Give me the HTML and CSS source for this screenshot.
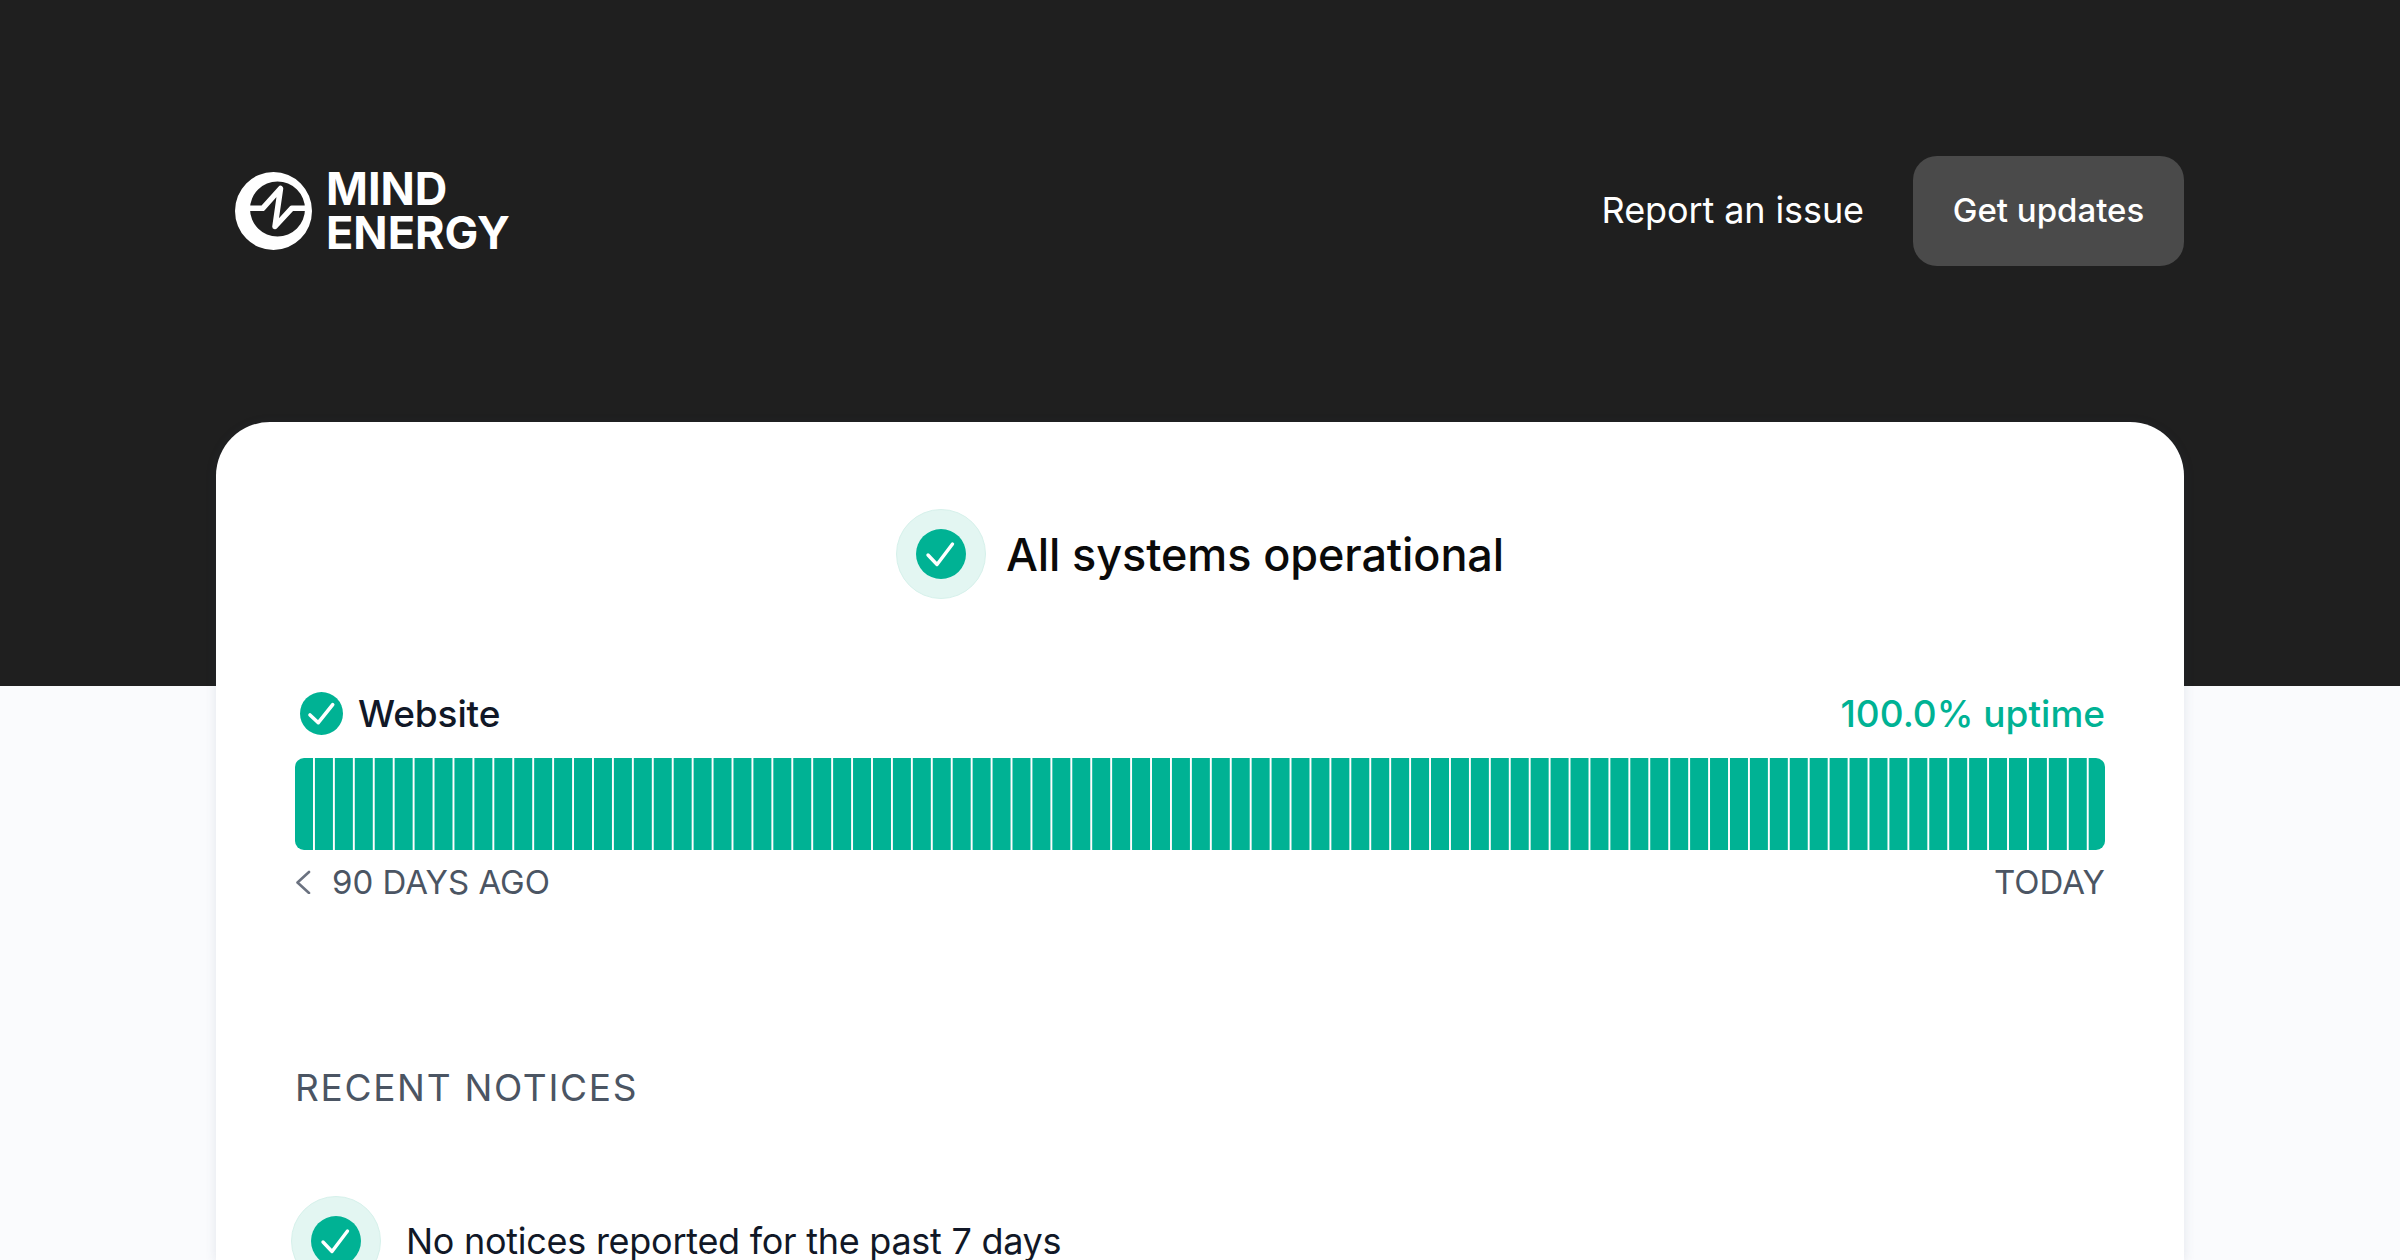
FILE: index.html
```html
<!DOCTYPE html>
<html lang="en">
<head>
<meta charset="utf-8">
<title>Mind Energy Status</title>
<link rel="stylesheet" href="styles.css">
</head>
<body>
<div class="page">
  <header class="topbar">
    <div class="logo">
      <svg class="logo-mark" viewBox="0 0 77 78" aria-hidden="true">
        <path fill="#fff" fill-rule="evenodd" d="M38.5 0a38.5 39 0 1 1 0 78a38.5 39 0 1 1 0-78ZM42.5 9.5a27.5 27.5 0 1 0 0 55a27.5 27.5 0 1 0 0-55Z"/>
        <path fill="none" stroke="#fff" stroke-width="5.5" stroke-linecap="round" stroke-linejoin="round" d="M15 36.3H27.7L45.5 16.5L40 54.5L56.7 36.3H70"/>
      </svg>
      <div class="logo-text">MIND<br>ENERGY</div>
    </div>
    <nav class="nav">
      <a class="nav-link">Report an issue</a>
      <a class="nav-button">Get updates</a>
    </nav>
  </header>
  <main class="card">
    <div class="status">
      <span class="halo"><svg class="check-dot" viewBox="0 0 50 50" aria-hidden="true"><circle cx="25" cy="25" r="25" fill="#00b294"/><path d="M12 26L21 35.5L36.5 15" fill="none" stroke="#fff" stroke-width="3.4" stroke-linecap="round" stroke-linejoin="round"/></svg></span>
      <h1 class="status-title">All systems operational</h1>
    </div>
    <section class="monitor">
      <div class="monitor-head">
        <div class="monitor-name">
          <svg class="check-small" viewBox="0 0 43 43" aria-hidden="true"><circle cx="21.5" cy="21.5" r="21.5" fill="#00b294"/><path d="M10 23L18.3 30.7L32.7 12.7" fill="none" stroke="#fff" stroke-width="3.6" stroke-linecap="round" stroke-linejoin="round"/></svg>
          <span>Website</span>
        </div>
        <div class="uptime">100.0% uptime</div>
      </div>
      <svg class="bars" viewBox="0 0 1810 92" aria-hidden="true">
        <rect x="0"/><rect x="19.93"/><rect x="39.86"/><rect x="59.79"/><rect x="79.72"/><rect x="99.65"/><rect x="119.58"/><rect x="139.51"/><rect x="159.44"/><rect x="179.37"/>
        <rect x="199.3"/><rect x="219.23"/><rect x="239.16"/><rect x="259.09"/><rect x="279.02"/><rect x="298.95"/><rect x="318.88"/><rect x="338.81"/><rect x="358.74"/><rect x="378.67"/>
        <rect x="398.6"/><rect x="418.53"/><rect x="438.46"/><rect x="458.39"/><rect x="478.32"/><rect x="498.25"/><rect x="518.18"/><rect x="538.11"/><rect x="558.04"/><rect x="577.97"/>
        <rect x="597.9"/><rect x="617.83"/><rect x="637.76"/><rect x="657.69"/><rect x="677.62"/><rect x="697.55"/><rect x="717.48"/><rect x="737.41"/><rect x="757.34"/><rect x="777.27"/>
        <rect x="797.2"/><rect x="817.13"/><rect x="837.06"/><rect x="856.99"/><rect x="876.92"/><rect x="896.85"/><rect x="916.78"/><rect x="936.71"/><rect x="956.64"/><rect x="976.57"/>
        <rect x="996.5"/><rect x="1016.43"/><rect x="1036.36"/><rect x="1056.29"/><rect x="1076.22"/><rect x="1096.15"/><rect x="1116.08"/><rect x="1136.01"/><rect x="1155.94"/><rect x="1175.87"/>
        <rect x="1195.8"/><rect x="1215.73"/><rect x="1235.66"/><rect x="1255.59"/><rect x="1275.52"/><rect x="1295.45"/><rect x="1315.38"/><rect x="1335.31"/><rect x="1355.24"/><rect x="1375.17"/>
        <rect x="1395.1"/><rect x="1415.03"/><rect x="1434.96"/><rect x="1454.89"/><rect x="1474.82"/><rect x="1494.75"/><rect x="1514.68"/><rect x="1534.61"/><rect x="1554.54"/><rect x="1574.47"/>
        <rect x="1594.4"/><rect x="1614.33"/><rect x="1634.26"/><rect x="1654.19"/><rect x="1674.12"/><rect x="1694.05"/><rect x="1713.98"/><rect x="1733.91"/><rect x="1753.84"/><rect x="1773.77"/>
        <rect x="1793.7" class="bar-last"/>
      </svg>
      <div class="range">
        <div class="range-start">
          <svg class="chevron" viewBox="0 0 16 24" aria-hidden="true"><path d="M14 2L2.5 12.5L14 23" fill="none" stroke="#6b7280" stroke-width="2.6" stroke-linecap="round" stroke-linejoin="round"/></svg>
          <span>90 DAYS AGO</span>
        </div>
        <span>TODAY</span>
      </div>
    </section>
    <section class="notices">
      <h2 class="notices-title">RECENT NOTICES</h2>
      <div class="notice">
        <span class="halo"><svg class="check-dot" viewBox="0 0 50 50" aria-hidden="true"><circle cx="25" cy="25" r="25" fill="#00b294"/><path d="M12 26L21 35.5L36.5 15" fill="none" stroke="#fff" stroke-width="3.4" stroke-linecap="round" stroke-linejoin="round"/></svg></span>
        <span class="notice-text">No notices reported for the past 7 days</span>
      </div>
    </section>
  </main>
</div>
</body>
</html>
```
FILE: styles.css
```css
* { box-sizing: border-box; }
html, body { margin: 0; }
body {
  height: 1260px;
  overflow: hidden;
  font-family: Inter, "Liberation Sans", sans-serif;
  background: linear-gradient(#1f1f1f 0 686px, #fafbfd 686px);
}
.page { width: 1968px; height: 1260px; margin: 0 auto; }
.topbar {
  height: 422px;
  display: flex;
  align-items: center;
  justify-content: space-between;
  padding: 0 0 0 19px;
}
.logo { display: flex; align-items: center; gap: 14px; color: #fff; }
.logo-mark { width: 77px; height: 78px; display: block; }
.logo-text { font-size: 45px; font-weight: 700; line-height: 44px; }
.nav { display: flex; align-items: center; gap: 49px; }
.nav-link { font-size: 36px; color: #fff; padding-bottom: 2px; letter-spacing: -0.1px; }
.nav-button {
  width: 271px;
  height: 110px;
  display: flex;
  align-items: center;
  justify-content: center;
  padding-bottom: 2px;
  border-radius: 24px;
  background: #4a4a4a;
  color: #fff;
  font-size: 33px;
  font-weight: 500;
}
.card {
  height: 838px;
  padding: 0 79px;
  background: #fff;
  border-radius: 54px 54px 0 0;
  box-shadow: 0 2px 12px rgba(60, 70, 110, 0.12);
}
.status {
  padding-top: 87px;
  display: flex;
  align-items: center;
  justify-content: center;
  gap: 20px;
}
.halo {
  width: 90px;
  height: 90px;
  flex: none;
  display: flex;
  align-items: center;
  justify-content: center;
  border-radius: 50%;
  background: #e3f6f2;
  border: 1px solid #d6f1eb;
}
.check-dot { width: 50px; height: 50px; display: block; }
.status-title { margin: 0; font-size: 45px; font-weight: 500; letter-spacing: -0.1px; color: #0a0a0a; }
.monitor { margin-top: 92px; }
.monitor-head {
  display: flex;
  align-items: center;
  justify-content: space-between;
  height: 44px;
  font-size: 37px;
  font-weight: 500;
}
.monitor-name { display: flex; align-items: center; gap: 15px; padding-left: 5px; color: #111827; letter-spacing: -0.1px; }
.check-small { width: 43px; height: 43px; display: block; }
.uptime { color: #00b294; }
.bars {
  display: block;
  margin-top: 23px;
  width: 1810px;
  height: 92px;
  border-radius: 9px;
}
.bars rect { width: 18px; height: 92px; fill: #00b294; }
.bars .bar-last { width: 16.3px; }
.range {
  margin-top: 12px;
  display: flex;
  justify-content: space-between;
  font-size: 33px;
  color: #4b5563;
}
.range-start { display: flex; align-items: center; gap: 21px; }
.chevron { width: 16px; height: 24px; display: block; }
.notices { margin-top: 163px; }
.notices-title {
  margin: 0;
  font-size: 37px;
  font-weight: 400;
  letter-spacing: 1.7px;
  color: #4b5563;
}
.notice { margin-top: 86px; margin-left: -4px; display: flex; align-items: center; gap: 25px; }
.notice-text { font-size: 36px; letter-spacing: -0.27px; color: #111827; }
```
